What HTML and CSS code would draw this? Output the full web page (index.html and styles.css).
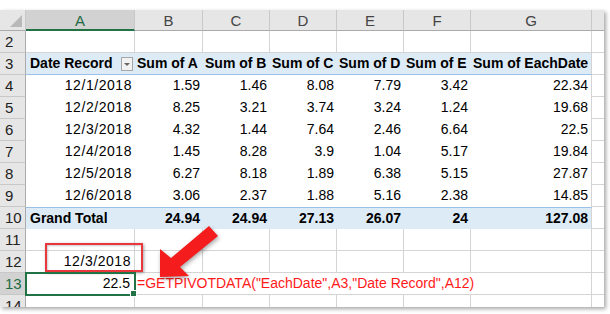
FILE: index.html
```html
<!DOCTYPE html>
<html>
<head>
<meta charset="utf-8">
<link rel="stylesheet" href="styles.css">
</head>
<body>
<div class="sheet">
  <div class="grid">
    <div class="ch corner"></div>
    <div class="ch sel">A</div>
    <div class="ch">B</div>
    <div class="ch">C</div>
    <div class="ch">D</div>
    <div class="ch">E</div>
    <div class="ch">F</div>
    <div class="ch">G</div>
    <div class="ch last"></div>

    <div class="rh">2</div>
    <div class="c"></div><div class="c"></div><div class="c"></div><div class="c"></div><div class="c"></div><div class="c"></div><div class="c"></div><div class="c last"></div>

    <div class="rh">3</div>
    <div class="ph first"><span>Date Record</span><span class="dd"></span></div>
    <div class="ph">Sum of A</div>
    <div class="ph">Sum of B</div>
    <div class="ph">Sum of C</div>
    <div class="ph">Sum of D</div>
    <div class="ph">Sum of E</div>
    <div class="ph g">Sum of EachDate</div>
    <div class="c last"></div>

    <div class="rh">4</div>
    <div class="pv date">12/1/2018</div><div class="pv">1.59</div><div class="pv">1.46</div><div class="pv">8.08</div><div class="pv">7.79</div><div class="pv">3.42</div><div class="pv g">22.34</div><div class="c last"></div>

    <div class="rh">5</div>
    <div class="pv date">12/2/2018</div><div class="pv">8.25</div><div class="pv">3.21</div><div class="pv">3.74</div><div class="pv">3.24</div><div class="pv">1.24</div><div class="pv g">19.68</div><div class="c last"></div>

    <div class="rh">6</div>
    <div class="pv date">12/3/2018</div><div class="pv">4.32</div><div class="pv">1.44</div><div class="pv">7.64</div><div class="pv">2.46</div><div class="pv">6.64</div><div class="pv g">22.5</div><div class="c last"></div>

    <div class="rh">7</div>
    <div class="pv date">12/4/2018</div><div class="pv">1.45</div><div class="pv">8.28</div><div class="pv">3.9</div><div class="pv">1.04</div><div class="pv">5.17</div><div class="pv g">19.84</div><div class="c last"></div>

    <div class="rh">8</div>
    <div class="pv date">12/5/2018</div><div class="pv">6.27</div><div class="pv">8.18</div><div class="pv">1.89</div><div class="pv">6.38</div><div class="pv">5.15</div><div class="pv g">27.87</div><div class="c last"></div>

    <div class="rh">9</div>
    <div class="pv date">12/6/2018</div><div class="pv">3.06</div><div class="pv">2.37</div><div class="pv">1.88</div><div class="pv">5.16</div><div class="pv">2.38</div><div class="pv g">14.85</div><div class="c last"></div>

    <div class="rh">10</div>
    <div class="pt first">Grand Total</div><div class="pt">24.94</div><div class="pt">24.94</div><div class="pt">27.13</div><div class="pt">26.07</div><div class="pt">24</div><div class="pt g">127.08</div><div class="c last"></div>

    <div class="rh">11</div>
    <div class="c"></div><div class="c"></div><div class="c"></div><div class="c"></div><div class="c"></div><div class="c"></div><div class="c"></div><div class="c last"></div>

    <div class="rh">12</div>
    <div class="c num date">12/3/2018</div><div class="c"></div><div class="c"></div><div class="c"></div><div class="c"></div><div class="c"></div><div class="c"></div><div class="c last"></div>

    <div class="rh selr">13</div>
    <div class="c num active">22.5</div>
    <div class="c formula">=GETPIVOTDATA("EachDate",A3,"Date Record",A12)</div>
    <div class="c last"></div>

    <div class="rh">14</div>
    <div class="c"></div><div class="c"></div><div class="c"></div><div class="c"></div><div class="c"></div><div class="c"></div><div class="c"></div><div class="c last"></div>
  </div>
  <div class="redbox"></div>
</div>
<svg class="arrow" width="610" height="314" viewBox="0 0 610 314">
  <polygon points="160,277 160,249 171,258 209,226 218,236 180,267 189,276" fill="#f41c1c"/>
</svg>
</body>
</html>
```

FILE: styles.css
```css
html, body {
  margin: 0;
  padding: 0;
  background: #ffffff;
}
body {
  width: 610px;
  height: 314px;
  overflow: hidden;
  position: relative;
  font-family: "Liberation Sans", Arial, sans-serif;
  font-size: 14px;
  color: #000;
}
.sheet {
  position: relative;
  margin-top: 10px;
  width: 604px;
  height: 297px;
  overflow: hidden;
  background: #fff;
  box-shadow: 2px 2px 4px rgba(0,0,0,0.35);
}
.grid {
  display: grid;
  grid-template-columns: 26px 109px 68px 67px 67px 67px 67px 121px 12px;
  grid-template-rows: 21px repeat(12, 22px) 22px;
}
.grid > div {
  box-sizing: border-box;
  line-height: 21px;
  white-space: nowrap;
}
.ch {
  background: #e6e6e6;
  border-right: 1px solid #c8c8c8;
  border-bottom: 1px solid #ababab;
  color: #444;
  font-size: 15px;
  text-align: center;
  line-height: 21px;
}
.ch.sel {
  background: #d2d2d2;
  color: #1e6b41;
  border-bottom: 2px solid #217346;
}
.ch.last { border-right: none; }
.corner { position: relative; }
.corner::after {
  content: "";
  position: absolute;
  right: 3px;
  bottom: 3px;
  width: 12px;
  height: 12px;
  background: #b9b9b9;
  clip-path: polygon(100% 0, 100% 100%, 0 100%);
}
.rh {
  background: #e6e6e6;
  border-right: 1px solid #ababab;
  border-bottom: 1px solid #c8c8c8;
  color: #222;
  font-size: 15px;
  padding-left: 5px;
}
.rh.selr {
  background: #d2d2d2;
  color: #1e6b41;
}
.c {
  border-right: 1px solid #d4d4d4;
  border-bottom: 1px solid #d4d4d4;
}
.c.last { border-right: none; }
.num { text-align: right; padding-right: 3px; }
.date { letter-spacing: 0.55px; }
.pv {
  text-align: right;
  padding-right: 3px;
}
.pv.g, .pt.g, .ph.g { border-right: 1px solid #d4d4d4; }
.ph {
  background: #ddebf7;
  border-bottom: 1px solid #9bc2e6;
  font-weight: bold;
  padding-left: 2px;
}
.ph.first {
  display: flex;
  align-items: center;
  padding-left: 4px;
}
.dd {
  margin-left: auto;
  margin-right: 2px;
  width: 12px;
  height: 14px;
  box-sizing: border-box;
  border: 1px solid #a6a6a6;
  background: #f2f2f2;
  position: relative;
}
.dd::after {
  content: "";
  position: absolute;
  left: 2px;
  top: 5px;
  border-left: 3px solid transparent;
  border-right: 3px solid transparent;
  border-top: 3px solid #666;
}
.pt {
  background: #ddebf7;
  border-top: 1px solid #9bc2e6;
  font-weight: bold;
  text-align: right;
  padding-right: 3px;
  line-height: 20px !important;
}
.pt.first { text-align: left; padding-left: 4px; }
.active {
  position: relative;
  outline: 2px solid #217346;
  outline-offset: -1px;
  z-index: 2;
  padding-right: 4px !important;
}
.active::after {
  content: "";
  position: absolute;
  right: -3px;
  bottom: -3px;
  width: 5px;
  height: 5px;
  background: #217346;
  border: 1px solid #fff;
}
.formula {
  grid-column: span 6;
  color: #ff1a1a;
  padding-left: 2px;
  border-right: 1px solid #d4d4d4;
}
.redbox {
  position: absolute;
  left: 45px;
  top: 233px;
  width: 98px;
  height: 29px;
  box-sizing: border-box;
  border: 2px solid #e8383d;
  box-shadow: 1px 1px 3px rgba(0,0,0,0.35), inset 1px 1px 2px rgba(0,0,0,0.2);
}
.arrow {
  position: absolute;
  left: 0;
  top: 0;
  filter: drop-shadow(1px 2px 2px rgba(0,0,0,0.35));
}
```
